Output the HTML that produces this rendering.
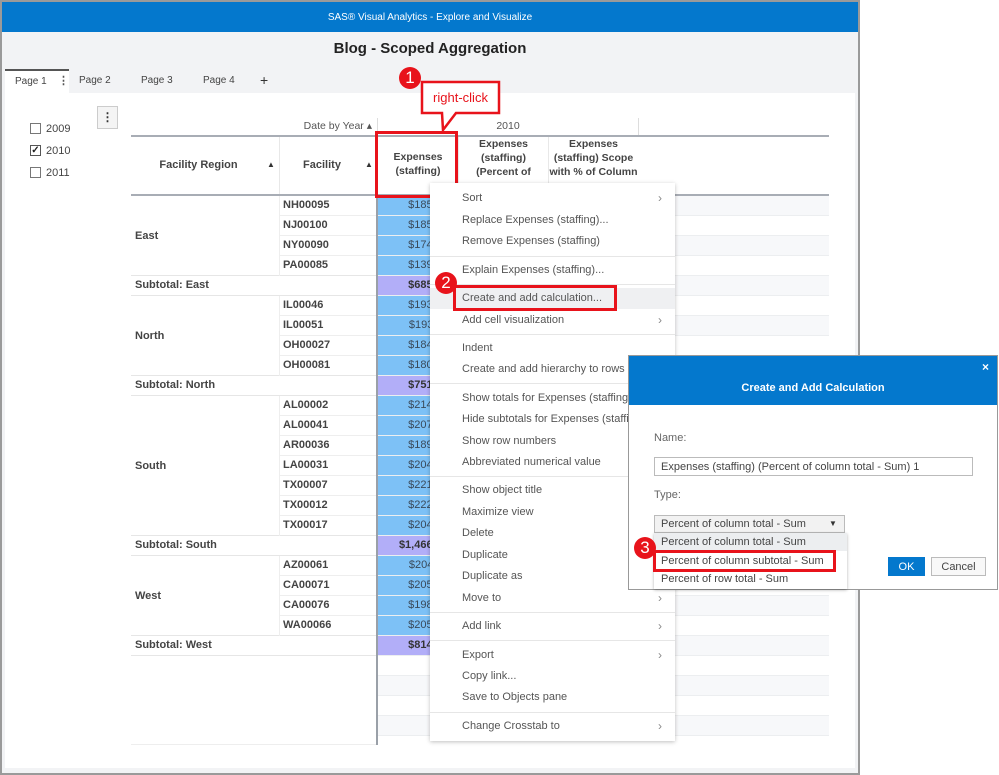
<!DOCTYPE html>
<html><head><meta charset="utf-8">
<style>
*{margin:0;padding:0;box-sizing:border-box}
body{width:999px;height:775px;background:#fff;position:relative;overflow:hidden;font-family:"Liberation Sans",sans-serif;font-size:11px;color:#333}
.a{position:absolute}
.t{position:absolute;white-space:nowrap;line-height:16px}
.red{border:3px solid #e8131b}
.circ{position:absolute;width:22px;height:22px;border-radius:50%;background:#e8131b;color:#fff;font-size:17px;line-height:22px;text-align:center}
.mi{position:absolute;left:462px;white-space:nowrap;line-height:16px;color:#555}
.sep{position:absolute;left:430px;width:245px;height:1px;background:#e6e6e6}
.chev{position:absolute;left:658px;color:#888;font-size:12px;line-height:16px}
</style></head><body>
<div class="a" style="left:0;top:0;width:860px;height:775px;border:2px solid #9a9a9a;background:#f2f3f5"></div>
<div class="a" style="left:2px;top:2px;width:856px;height:30px;background:#0478cd"></div>
<div class="t" style="left:0;width:860px;text-align:center;top:10px;color:#fff;font-size:10px">SAS® Visual Analytics - Explore and Visualize</div>
<div class="t" style="left:0;width:860px;text-align:center;top:40px;color:#222;font-size:15px;font-weight:bold;line-height:18px">Blog - Scoped Aggregation</div>
<div class="a" style="left:5px;top:93px;width:850px;height:675px;background:#fff"></div>
<div class="a" style="left:5px;top:69px;width:64px;height:24px;background:#fff;border-top:2px solid #555"></div>
<div class="t" style="left:15px;top:74px;font-size:10px;color:#444">Page 1</div>
<div class="t" style="left:58px;top:73px;font-size:11px;font-weight:bold;color:#555">⋮</div>
<div class="t" style="left:79px;top:73px;font-size:10px;color:#444">Page 2</div>
<div class="t" style="left:141px;top:73px;font-size:10px;color:#444">Page 3</div>
<div class="t" style="left:203px;top:73px;font-size:10px;color:#444">Page 4</div>
<div class="t" style="left:260px;top:72px;font-size:14px;color:#333">+</div>
<div class="a" style="left:30px;top:123px;width:11px;height:11px;border:1px solid #777"></div>
<div class="t" style="left:46px;top:121px;font-size:11px;color:#444">2009</div>
<div class="a" style="left:30px;top:145px;width:11px;height:11px;border:1px solid #555;font-size:10px;line-height:9px;text-align:center;color:#222;font-weight:bold">✓</div>
<div class="t" style="left:46px;top:143px;font-size:11px;color:#444">2010</div>
<div class="a" style="left:30px;top:167px;width:11px;height:11px;border:1px solid #777"></div>
<div class="t" style="left:46px;top:165px;font-size:11px;color:#444">2011</div>
<div class="a" style="left:97px;top:106px;width:21px;height:23px;border:1px solid #ccc;background:#f4f4f4;text-align:center;font-weight:bold;line-height:21px;font-size:12px">⋮</div>
<div class="t" style="left:280px;width:92px;text-align:right;top:118px;font-size:10.5px;color:#555">Date by Year ▴</div>
<div class="a" style="left:377px;top:118px;width:1px;height:18px;background:#ddd"></div>
<div class="a" style="left:638px;top:118px;width:1px;height:18px;background:#ddd"></div>
<div class="t" style="left:378px;width:260px;text-align:center;top:118px;font-size:10.5px;color:#555">2010</div>
<div class="a" style="left:131px;top:135px;width:698px;height:2px;background:#a8adb5"></div>
<div class="t" style="left:131px;width:135px;text-align:center;top:157px;font-weight:bold;font-size:11px;color:#444">Facility Region</div>
<div class="t" style="left:267px;top:157px;font-size:8px;color:#333">▲</div>
<div class="a" style="left:279px;top:137px;width:1px;height:58px;background:#e8e8e8"></div>
<div class="t" style="left:280px;width:84px;text-align:center;top:157px;font-weight:bold;font-size:11px;color:#444">Facility</div>
<div class="t" style="left:365px;top:157px;font-size:8px;color:#333">▲</div>
<div class="t" style="left:378px;width:80px;text-align:center;top:150px;font-weight:bold;font-size:10.5px;color:#444;line-height:14px;white-space:normal">Expenses (staffing)</div>
<div class="a" style="left:458px;top:137px;width:1px;height:58px;background:#e8e8e8"></div>
<div class="t" style="left:459px;width:89px;text-align:center;top:137px;font-weight:bold;font-size:10.5px;color:#444;line-height:14px;white-space:normal;height:44px;overflow:hidden">Expenses (staffing) (Percent of column total</div>
<div class="a" style="left:548px;top:137px;width:1px;height:58px;background:#e8e8e8"></div>
<div class="t" style="left:549px;width:89px;text-align:center;top:137px;font-weight:bold;font-size:10.5px;color:#444;line-height:14px;white-space:normal;height:44px;overflow:hidden">Expenses (staffing) Scope with % of Column Total</div>
<div class="a" style="left:131px;top:194px;width:698px;height:2px;background:#a8adb5"></div>
<div id="rows"></div>
<div class="a" style="left:376px;top:136px;width:2px;height:609px;background:#9aa0a8"></div>
<div class="a" style="left:131px;top:744px;width:245px;height:1px;background:#eee"></div>
<div class="a red" style="left:375px;top:131px;width:83px;height:67px"></div>
<svg class="a" style="left:420px;top:80px" width="82" height="54"><path d="M2 2 H79 V33 H36 L23 50 L22 33 H2 Z" fill="#fff" stroke="#e8131b" stroke-width="2.5"/></svg>
<div class="t" style="left:421px;width:79px;text-align:center;top:90px;color:#e8131b;font-size:13px">right-click</div>
<div class="circ" style="left:399px;top:67px">1</div>
<div class="a" style="left:430px;top:183px;width:245px;height:558px;background:#fff;box-shadow:0 1px 4px rgba(0,0,0,.25)"></div>
<div class="a" style="left:430px;top:288px;width:245px;height:21px;background:#eff0f2"></div>
<div class="mi" style="top:190px">Sort</div><div class="chev" style="top:190px">›</div>
<div class="mi" style="top:212px">Replace Expenses (staffing)...</div>
<div class="mi" style="top:233px">Remove Expenses (staffing)</div>
<div class="sep" style="top:256px"></div>
<div class="mi" style="top:262px">Explain Expenses (staffing)...</div>
<div class="sep" style="top:284px"></div>
<div class="mi" style="top:290px">Create and add calculation...</div>
<div class="mi" style="top:312px">Add cell visualization</div><div class="chev" style="top:312px">›</div>
<div class="sep" style="top:334px"></div>
<div class="mi" style="top:340px">Indent</div>
<div class="mi" style="top:361px">Create and add hierarchy to rows</div>
<div class="sep" style="top:383px"></div>
<div class="mi" style="top:390px">Show totals for Expenses (staffing)</div>
<div class="mi" style="top:411px">Hide subtotals for Expenses (staffing)</div>
<div class="mi" style="top:433px">Show row numbers</div>
<div class="mi" style="top:454px">Abbreviated numerical value</div>
<div class="sep" style="top:476px"></div>
<div class="mi" style="top:482px">Show object title</div>
<div class="mi" style="top:504px">Maximize view</div>
<div class="mi" style="top:525px">Delete</div>
<div class="mi" style="top:547px">Duplicate</div>
<div class="mi" style="top:568px">Duplicate as</div>
<div class="mi" style="top:590px">Move to</div><div class="chev" style="top:590px">›</div>
<div class="sep" style="top:612px"></div>
<div class="mi" style="top:618px">Add link</div><div class="chev" style="top:618px">›</div>
<div class="sep" style="top:640px"></div>
<div class="mi" style="top:647px">Export</div><div class="chev" style="top:647px">›</div>
<div class="mi" style="top:668px">Copy link...</div>
<div class="mi" style="top:689px">Save to Objects pane</div>
<div class="sep" style="top:712px"></div>
<div class="mi" style="top:718px">Change Crosstab to</div><div class="chev" style="top:718px">›</div>
<div class="a red" style="left:453px;top:285px;width:164px;height:26px"></div>
<div class="circ" style="left:435px;top:272px">2</div>
<div class="a" style="left:628px;top:355px;width:370px;height:235px;background:#fff;border:1px solid #999"></div>
<div class="a" style="left:629px;top:356px;width:368px;height:49px;background:#0478cd"></div>
<div class="t" style="left:982px;top:359px;color:#fff;font-size:12px;font-weight:bold">×</div>
<div class="t" style="left:629px;width:368px;text-align:center;top:380px;color:#fff;font-weight:bold;font-size:11px">Create and Add Calculation</div>
<div class="t" style="left:654px;top:430px;color:#666">Name:</div>
<div class="a" style="left:654px;top:457px;width:319px;height:19px;border:1px solid #bbb"></div>
<div class="t" style="left:661px;top:459px;color:#444">Expenses (staffing) (Percent of column total - Sum) 1</div>
<div class="t" style="left:654px;top:487px;color:#666">Type:</div>
<div class="a" style="left:654px;top:515px;width:191px;height:18px;border:1px solid #bbb;background:#f2f2f2"></div>
<div class="t" style="left:661px;top:516px;color:#444">Percent of column total - Sum</div>
<div class="t" style="left:829px;top:516px;font-size:8px;color:#333">▼</div>
<div class="a" style="left:654px;top:533px;width:193px;height:56px;background:#fff;box-shadow:0 1px 3px rgba(0,0,0,.3)"></div>
<div class="a" style="left:654px;top:533px;width:193px;height:18px;background:#eceef0"></div>
<div class="t" style="left:661px;top:534px;color:#444">Percent of column total - Sum</div>
<div class="t" style="left:661px;top:553px;color:#444">Percent of column subtotal - Sum</div>
<div class="t" style="left:661px;top:571px;color:#444">Percent of row total - Sum</div>
<div class="a" style="left:888px;top:557px;width:37px;height:19px;background:#0478cd"></div>
<div class="t" style="left:888px;width:37px;text-align:center;top:559px;color:#fff">OK</div>
<div class="a" style="left:931px;top:557px;width:55px;height:19px;border:1px solid #bbb;background:#f8f8f8"></div>
<div class="t" style="left:931px;width:55px;text-align:center;top:559px;color:#444">Cancel</div>
<div class="a red" style="left:653px;top:550px;width:183px;height:22px"></div>
<div class="circ" style="left:634px;top:537px">3</div>
<script>
var rows=[["East","NH00095","$185,432"],["","NJ00100","$185,210"],["","NY00090","$174,988"],["","PA00085","$139,554"],["S","Subtotal: East","$685,184"],
["North","IL00046","$193,402"],["","IL00051","$193,118"],["","OH00027","$184,630"],["","OH00081","$180,276"],["S","Subtotal: North","$751,426"],
["South","AL00002","$214,350"],["","AL00041","$207,884"],["","AR00036","$189,412"],["","LA00031","$204,560"],["","TX00007","$221,306"],["","TX00012","$222,718"],["","TX00017","$204,632"],["S","Subtotal: South","$1,466,862"],
["West","AZ00061","$204,118"],["","CA00071","$205,442"],["","CA00076","$198,730"],["","WA00066","$205,996"],["S","Subtotal: West","$814,286"]];
var h="",groups={East:[0,4],North:[5,4],South:[10,7],West:[18,4]};
for(var i=0;i<27;i++){var y=196+i*20;
 if(i%2==0)h+='<div class="a" style="left:378px;top:'+y+'px;width:451px;height:20px;background:#f7f8fa"></div>';
 h+='<div class="a" style="left:378px;top:'+(y+19)+'px;width:451px;height:1px;background:#eceef0"></div>';
 if(i<rows.length){var r=rows[i];
  if(r[0]=="S"){h+='<div class="a" style="left:131px;top:'+(y+19)+'px;width:245px;height:1px;background:#e6e6e6"></div><div class="a" style="left:131px;top:'+(y-1)+'px;width:245px;height:1px;background:#e6e6e6"></div><div class="t" style="left:135px;top:'+(y+1)+'px;font-weight:bold;color:#444">'+r[1]+'</div><div class="a" style="left:378px;top:'+y+'px;width:80px;height:19px;background:#b2aef8"></div><div class="t" style="left:378px;width:76px;text-align:right;top:'+(y+1)+'px;font-weight:bold;color:#333">'+r[2]+'</div>';}
  else{h+='<div class="a" style="left:280px;top:'+(y+19)+'px;width:96px;height:1px;background:#eee"></div><div class="t" style="left:283px;top:'+(y+1)+'px;font-weight:bold;color:#444">'+r[1]+'</div><div class="a" style="left:378px;top:'+y+'px;width:80px;height:19px;background:#7dc1f6"></div><div class="t" style="left:378px;width:76px;text-align:right;top:'+(y+1)+'px;color:#3a4a5a">'+r[2]+'</div>';}
 }}
for(var g in groups){var s=groups[g],y=196+s[0]*20;
 h+='<div class="a" style="left:279px;top:'+y+'px;width:1px;height:'+(s[1]*20)+'px;background:#eee"></div><div class="t" style="left:135px;top:'+(y+s[1]*10-8)+'px;font-weight:bold;color:#444">'+g+'</div>';}
document.getElementById("rows").innerHTML=h;
</script>
</body></html>
